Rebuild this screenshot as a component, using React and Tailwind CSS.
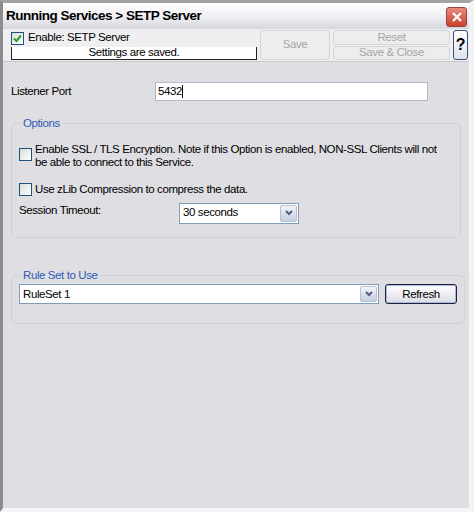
import React from "react";

function Checkbox({ checked }) {
  return (
    <span className="w-[13px] h-[13px] shrink-0 border border-[#1c5180] bg-gradient-to-br from-[#dcdcd7] to-white flex items-center justify-center">
      {checked && (
        <svg width="9" height="9" viewBox="0 0 9 9">
          <path d="M1 4.5 L3.5 7 L8 1.5" stroke="#21a121" strokeWidth="2" fill="none" />
        </svg>
      )}
    </span>
  );
}

function DropArrow() {
  return (
    <span className="w-[17px] self-stretch m-[1px] bg-gradient-to-b from-[#f4f4f8] to-[#c8cde0] border border-[#b8c0d8] rounded-[2px] flex items-center justify-center">
      <svg width="8" height="6" viewBox="0 0 8 6">
        <path d="M1 1 L4 4 L7 1" stroke="#4d6185" strokeWidth="2" fill="none" />
      </svg>
    </span>
  );
}

export default function App() {
  return (
    <div
      className="w-[474px] h-[512px] flex flex-col bg-[#dfdee3] border-t-[3px] border-t-[#a3a3a5] border-l-[3px] border-l-[#8c8c8e] border-r-[5px] border-r-[#f3f3f5] border-b-[4px] border-b-[#f5f5f7] text-[11.5px] tracking-[-0.4px] text-black overflow-hidden"
      style={{ fontFamily: '"Liberation Sans", Arial, sans-serif' }}
    >
      {/* Title bar */}
      <div className="h-[26px] flex items-center justify-between pl-[3px] pr-[2px] bg-gradient-to-b from-white via-[#f0f0f4] to-[#d6d6de]">
        <span className="font-bold text-[13.5px] tracking-[-0.5px]">Running Services &gt; SETP Server</span>
        <span className="w-[21px] h-[20px] mt-[2px] rounded-[3px] border border-[#9a4040] bg-gradient-to-b from-[#e98a7a] to-[#c8402f] flex items-center justify-center">
          <svg width="12" height="12" viewBox="0 0 12 12">
            <path d="M2 2 L10 10 M10 2 L2 10" stroke="white" strokeWidth="2.2" />
          </svg>
        </span>
      </div>

      {/* Toolbar */}
      <div className="h-[33px] flex items-stretch pt-[1px] pb-[1px] bg-[#efeff1] border-b border-[#c8c8cc]">
        <div className="w-[254px] flex flex-col pl-[8px]">
          <label className="h-[16px] flex items-center gap-[4px]">
            <Checkbox checked />
            <span>Enable: SETP Server</span>
          </label>
          <div className="h-[15px] mt-[1px] bg-white border-l border-b border-r border-[#222] flex items-center justify-center leading-none">
            Settings are saved.
          </div>
        </div>
        <button className="ml-[3px] w-[70px] rounded-[3px] border border-[#d6d6d6] bg-[#ededed] text-[#a6a6a6]">
          Save
        </button>
        <div className="ml-[3px] w-[117px] flex flex-col gap-[1px]">
          <button className="flex-1 rounded-[3px] border border-[#d6d6d6] bg-[#ededed] text-[#a6a6a6] leading-none">
            Reset
          </button>
          <button className="flex-1 rounded-[3px] border border-[#d6d6d6] bg-[#ededed] text-[#a6a6a6] leading-none">
            Save &amp; Close
          </button>
        </div>
        <button className="ml-[3px] w-[15px] rounded-[3px] border border-[#3c4f78] bg-gradient-to-b from-white to-[#dde2ee] font-bold text-[16px] flex items-center justify-center">
          ?
        </button>
      </div>

      {/* Body */}
      <div className="flex flex-col px-[8px]">
        <div className="mt-[20px] flex items-center">
          <span className="w-[144px]">Listener Port</span>
          <div className="w-[273px] h-[19px] bg-white border border-[#b5b8c8] flex items-center px-[2px]">
            5432<span className="w-[1px] h-[13px] bg-black" />
          </div>
        </div>

        <fieldset className="mt-[14px] w-[450px] h-[123px] border border-[#cfcfd4] rounded-[5px] px-[7px] pb-0">
          <legend className="px-[2px] ml-[2px] text-[#2e5bb3]">Options</legend>
          <div className="mt-[11px] flex items-start gap-[3px]">
            <span className="mt-[5px]">
              <Checkbox />
            </span>
            <span className="leading-[13px] max-w-[402px]">
              Enable SSL / TLS Encryption. Note if this Option is enabled, NON-SSL Clients will not be able to connect to this Service.
            </span>
          </div>
          <div className="mt-[12px] flex items-center gap-[3px]">
            <Checkbox />
            <span>Use zLib Compression to compress the data.</span>
          </div>
          <div className="mt-[3px] flex items-start">
            <span className="w-[160px]">Session Timeout:</span>
            <div className="mt-[1px] w-[120px] h-[21px] bg-white border border-[#7f9db9] flex items-center pl-[3px]">
              <span className="flex-1">30 seconds</span>
              <DropArrow />
            </div>
          </div>
        </fieldset>

        <fieldset className="mt-[29px] w-[450px] h-[57px] border border-[#cfcfd4] rounded-[5px] px-[7px]">
          <legend className="px-[2px] ml-[2px] text-[#2e5bb3]">Rule Set to Use</legend>
          <div className="flex items-center">
            <div className="w-[360px] h-[20px] bg-white border border-[#7f9db9] flex items-center pl-[3px]">
              <span className="flex-1">RuleSet 1</span>
              <DropArrow />
            </div>
            <button className="ml-[6px] w-[72px] h-[20px] border border-[#1a2233] rounded-[3px] bg-gradient-to-b from-white to-[#dcdce6] shadow-[inset_0_0_0_1px_#a8b8e0]">
              Refresh
            </button>
          </div>
        </fieldset>
      </div>
    </div>
  );
}
